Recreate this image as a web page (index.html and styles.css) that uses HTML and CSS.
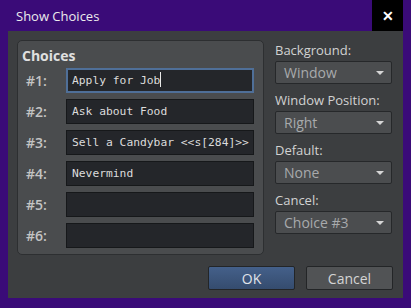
FILE: index.html
```html
<!DOCTYPE html>
<html lang="en">
  <head>
    <meta charset="UTF-8" />
    <title>Show Choices</title>
    <link rel="stylesheet" href="styles.css">
  </head>
  <body>
    <div class="window">
      <div class="titlebar">
        <span class="title">Show Choices</span>
        <span class="close">&#x2715;</span>
      </div>
      <div class="dialog">
        <div class="main">
          <div class="choices">
            <h3>Choices</h3>
            <div class="row"><label>#1:</label><div class="field focus">Apply for Job<span class="caret"></span></div></div>
            <div class="row"><label>#2:</label><div class="field">Ask about Food</div></div>
            <div class="row"><label>#3:</label><div class="field">Sell a Candybar &lt;&lt;s[284]&gt;&gt;</div></div>
            <div class="row"><label>#4:</label><div class="field">Nevermind</div></div>
            <div class="row"><label>#5:</label><div class="field"></div></div>
            <div class="row"><label>#6:</label><div class="field"></div></div>
          </div>
          <div class="options">
            <label>Background:</label>
            <div class="select">Window<span class="arrow"></span></div>
            <label>Window Position:</label>
            <div class="select">Right<span class="arrow"></span></div>
            <label>Default:</label>
            <div class="select">None<span class="arrow"></span></div>
            <label>Cancel:</label>
            <div class="select">Choice #3<span class="arrow"></span></div>
          </div>
        </div>
        <div class="buttons">
          <button class="btn ok">OK</button>
          <button class="btn">Cancel</button>
        </div>
      </div>
    </div>
  </body>
</html>
```

FILE: styles.css
```css
body {
  margin: 0;
  background: #3a0b78;
  font-family: "Open Sans", "Noto Sans", sans-serif;
  color: #d6d6d6;
}

.window {
  width: 395px;
  margin-left: 8px;
}

.titlebar {
  height: 31px;
  display: flex;
  align-items: center;
  justify-content: space-between;
}

.title {
  font-size: 13px;
  color: #ececec;
  margin-left: 8px;
  margin-top: 1px;
}

.close {
  width: 31px;
  height: 31px;
  background: #000;
  color: #fff;
  font-weight: bold;
  font-size: 14px;
  display: flex;
  align-items: center;
  justify-content: center;
}

.dialog {
  background: #3c3e40;
  height: 267px;
  padding: 9px 10px 0 9px;
  box-sizing: border-box;
}

.main {
  display: flex;
  gap: 11px;
}

.choices {
  width: 247px;
  height: 215px;
  box-sizing: border-box;
  background: #4a4c4e;
  border: 1px solid #2d2f31;
  border-radius: 5px;
  padding: 5px 9px 0 4px;
}

.choices h3 {
  margin: 0 0 2px;
  font-size: 14px;
  font-weight: bold;
  color: #e0e0e0;
  height: 20px;
}

.row {
  display: flex;
  align-items: center;
  height: 25px;
  margin-bottom: 6px;
}

.row label {
  width: 44px;
  padding-left: 4px;
  box-sizing: border-box;
  font-size: 14px;
  font-weight: 600;
  color: #c4c4c4;
}

.field {
  width: 188px;
  height: 25px;
  box-sizing: border-box;
  background: #24262a;
  border: 1px solid #16181a;
  font-family: "DejaVu Sans Mono", monospace;
  font-size: 11.3px;
  line-height: 23px;
  padding-left: 5px;
  color: #dcdcdc;
  white-space: nowrap;
  overflow: hidden;
}

.field.focus {
  border: 2px solid #4f6f98;
  line-height: 21px;
  padding-left: 4px;
}

.caret {
  display: inline-block;
  width: 1px;
  height: 15px;
  background: #e8e8e8;
  vertical-align: -3px;
}

.options {
  display: flex;
  flex-direction: column;
  width: 117px;
}

.options label {
  font-size: 13px;
  color: #d2d2d2;
  height: 21px;
  line-height: 20px;
}

.select {
  height: 23px;
  box-sizing: border-box;
  background: #4b4d4f;
  border: 1px solid #26282a;
  border-radius: 2px;
  font-size: 14px;
  color: #a8aaac;
  line-height: 21px;
  padding-left: 8px;
  margin-bottom: 6px;
  position: relative;
}

.arrow {
  position: absolute;
  right: 7px;
  top: 9px;
  border-left: 4px solid transparent;
  border-right: 4px solid transparent;
  border-top: 4px solid #d6d6d6;
}

.buttons {
  display: flex;
  justify-content: flex-end;
  gap: 11px;
  margin-top: 11px;
}

.btn {
  width: 87px;
  height: 24px;
  font-family: "Open Sans", "Noto Sans", sans-serif;
  font-size: 14px;
  color: #d4d4d4;
  background: #515355;
  border: 1px solid #232527;
  border-radius: 2px;
}

.btn.ok {
  background: linear-gradient(#44608a, #354c6e);
  color: #e0e4ea;
}
```
